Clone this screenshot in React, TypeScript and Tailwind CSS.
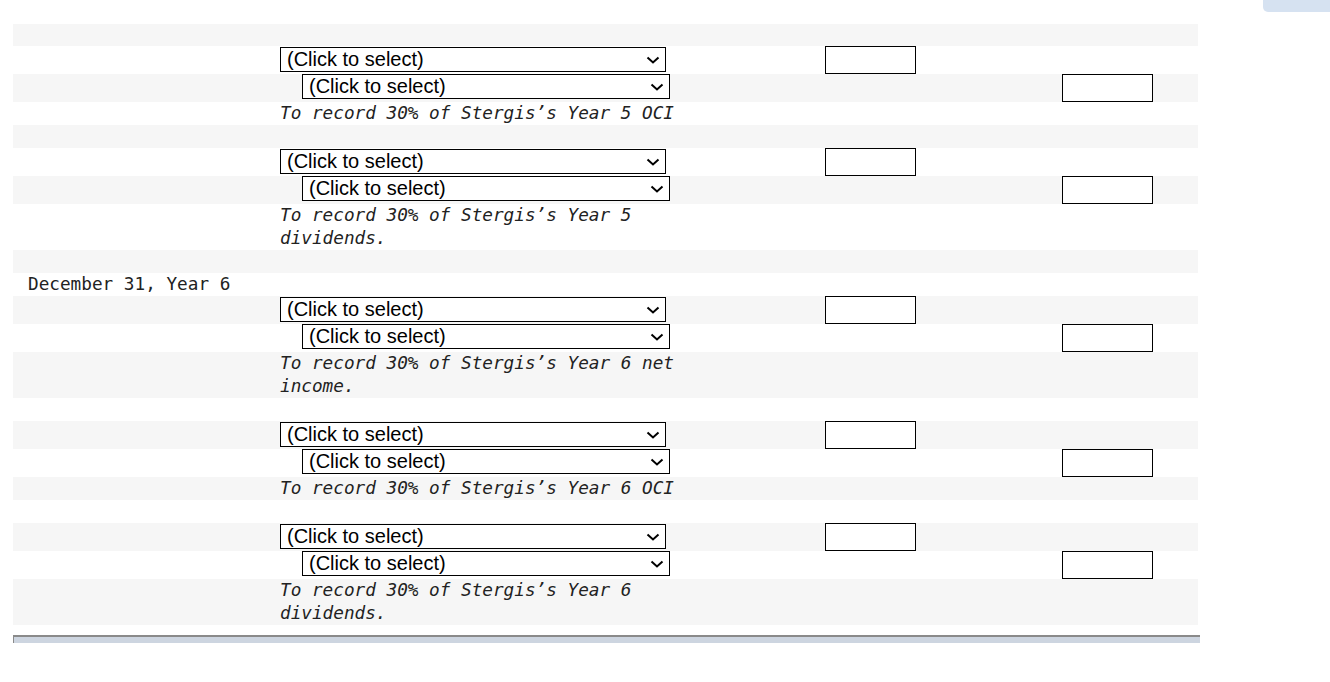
import React from 'react';

type Row =
  | { kind: 'empty' }
  | { kind: 'date'; text: string }
  | { kind: 'debit' }
  | { kind: 'credit' }
  | { kind: 'desc'; text: string };

const entries: { date?: string; note: string }[] = [
  { note: 'To record 30% of Stergis’s Year 5 OCI' },
  { note: 'To record 30% of Stergis’s Year 5 dividends.' },
  { date: 'December 31, Year 6', note: 'To record 30% of Stergis’s Year 6 net income.' },
  { note: 'To record 30% of Stergis’s Year 6 OCI' },
  { note: 'To record 30% of Stergis’s Year 6 dividends.' },
];

const rows: Row[] = [];
entries.forEach((e) => {
  rows.push({ kind: 'empty' });
  if (e.date) rows.push({ kind: 'date', text: e.date });
  rows.push({ kind: 'debit' });
  rows.push({ kind: 'credit' });
  rows.push({ kind: 'desc', text: e.note });
});

const Chevron = () => (
  <svg width="14" height="8" viewBox="0 0 14 8" className="pointer-events-none absolute right-[6px] top-1/2 -translate-y-1/2">
    <polyline points="1.5,1.5 7,6.5 12.5,1.5" fill="none" stroke="#000" strokeWidth="2" />
  </svg>
);

const Select = ({ width }: { width: string }) => (
  <div className={`relative h-[25px] ${width}`}>
    <select className="h-full w-full appearance-none rounded-none border border-black bg-white pl-[6px] text-[20px] leading-[23px] text-black font-['Liberation_Sans',Arial,sans-serif] outline-none">
      <option>(Click to select)</option>
    </select>
    <Chevron />
  </div>
);

const Amount = () => (
  <input type="text" className="h-[28px] w-[91px] rounded-none border border-black bg-white outline-none" />
);

export default function App() {
  return (
    <div className="relative min-h-[682px] w-[1330px] bg-white font-['DejaVu_Sans_Mono','Liberation_Mono',monospace] text-[17.7px] text-[#222]">
      <div className="absolute right-0 top-0 h-[12px] w-[67px] rounded-bl-[5px] bg-[#d6e2f1]" />

      <div className="ml-[13px] w-[1185px] pt-[24px]">
        {rows.map((row, i) => {
          const bg = i % 2 === 0 ? 'bg-[#f6f6f6]' : 'bg-white';
          if (row.kind === 'empty')
            return <div key={i} className={`${i === 0 ? 'h-[22px]' : 'h-[23px]'} ${bg}`} />;
          if (row.kind === 'date')
            return (
              <div key={i} className={`h-[23px] pl-[15px] leading-[23px] ${bg}`}>
                {row.text}
              </div>
            );
          if (row.kind === 'debit')
            return (
              <div key={i} className={`flex h-[28px] items-start ${bg}`}>
                <div className="w-[267px]" />
                <div className="mt-[1px] w-[545px]">
                  <Select width="w-[386px]" />
                </div>
                <Amount />
              </div>
            );
          if (row.kind === 'credit')
            return (
              <div key={i} className={`flex h-[28px] items-start ${bg}`}>
                <div className="w-[289px]" />
                <div className="w-[760px]">
                  <Select width="w-[368px]" />
                </div>
                <Amount />
              </div>
            );
          return (
            <div key={i} className={`flex ${bg}`}>
              <div className="w-[267px] shrink-0" />
              <p className="w-[430px] italic leading-[23px] text-[#222]">{row.text}</p>
            </div>
          );
        })}
      </div>

      <div className="ml-[13px] mt-[10px] h-[8px] w-[1187px] border-l border-t-2 border-[#8a8a8a] bg-[#cdd5e0]" />
    </div>
  );
}
